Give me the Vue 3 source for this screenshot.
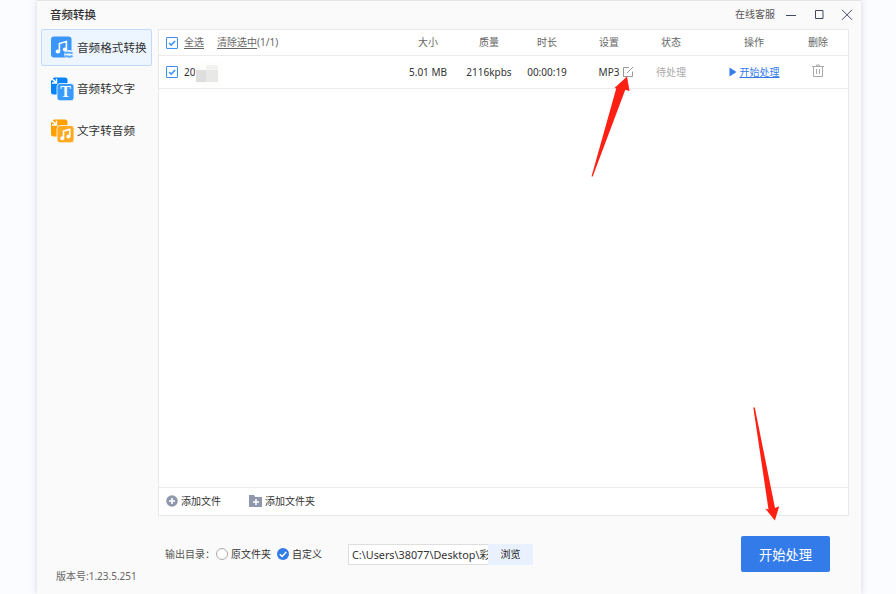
<template>
  <div class="desktop">
    <div class="window">
      <header class="title-bar">
        <h1>音频转换</h1>
        <div class="title-actions">
          <span class="service">在线客服</span>
          <svg class="win-icon" viewBox="0 0 12 12"><path d="M1 6.500h10" /></svg>
          <svg class="win-icon" viewBox="0 0 12 12"><path d="M2.500 1.500h7.500v8h-7.500z" /></svg>
          <svg class="win-icon" viewBox="0 0 12 12"><path d="M1 .8l10 10M11 .8l-10 10" /></svg>
        </div>
      </header>

      <div class="body">
        <aside class="sidebar">
          <nav>
            <button
              v-for="item in menus"
              :key="item.id"
              class="menu-item"
              :class="{ active: item.id === activeMenu }"
              @click="activeMenu = item.id"
            >
              <svg v-if="item.id === 'format'" class="menu-icon" viewBox="0 0 24 24">
                <rect x="1" y=".5" width="20.500" height="21" rx="3" fill="#3b96fa" />
                <path d="M9.400 15.500V7.600l7-2v8" fill="none" stroke="#fff" stroke-width="1.600" />
                <ellipse cx="7.900" cy="15.500" rx="2.300" ry="2" fill="#fff" />
                <ellipse cx="15" cy="13.500" rx="2.100" ry="1.900" fill="#fff" />
                <circle cx="18.800" cy="18.500" r="4.600" fill="#edf5ff" />
                <path d="M15.200 17.600c1.800-2.400 4-.3 7.400-.6M22.500 19.600c-1.800 2.400-4 .3-7.400.6" fill="none" stroke="#5aa8fb" stroke-width="1.900" />
              </svg>
              <svg v-else class="menu-icon" viewBox="0 0 24 24">
                <rect x="1" y=".5" width="16.500" height="17" rx="2.500" :fill="item.dark" />
                <path d="M0 0h4L1 4z" fill="#fafafa" />
                <path d="M1.500 1.200l4.600 4.400M6.500 1.800v4.300H2" fill="none" stroke="#fff" stroke-width="1.500" />
                <rect x="7" y="6.500" width="17" height="17.300" rx="3" :fill="item.light" stroke="#fafafa" stroke-width=".8" />
                <text v-if="item.id === 'toText'" class="letter" x="15.500" y="20.300">T</text>
                <template v-else>
                  <path d="M13.500 19v-7l6.200-1.600v7" fill="none" stroke="#fff" stroke-width="1.600" />
                  <circle cx="12.300" cy="19.200" r="2" fill="#fff" />
                  <circle cx="18.400" cy="17.600" r="2" fill="#fff" />
                </template>
              </svg>
              <span>{{ item.label }}</span>
            </button>
          </nav>
          <p class="version">版本号:1.23.5.251</p>
        </aside>

        <main class="main">
          <section class="panel">
            <div class="row row-head">
              <div class="name-cell">
                <span class="checkbox"><svg viewBox="0 0 12 12"><path d="M2.500 6l2.500 2.500 4.800-4.800" /></svg></span>
                <a class="select-all">全选</a>
                <span><a>清除选中</a>(1/1)</span>
              </div>
              <span v-for="col in columns" :key="col">{{ col }}</span>
            </div>

            <div v-for="file in files" :key="file.name" class="row row-file">
              <div class="name-cell">
                <span class="checkbox"><svg viewBox="0 0 12 12"><path d="M2.500 6l2.500 2.500 4.800-4.800" /></svg></span>
                <span>{{ file.name }}</span>
                <span class="mosaic"><i></i><i></i></span>
              </div>
              <span>{{ file.size }}</span>
              <span>{{ file.quality }}</span>
              <span>{{ file.duration }}</span>
              <span class="format">
                {{ file.format }}
                <svg class="edit" viewBox="0 0 12 12"><path d="M7 1.500H1.500v9h9V5.500M5 7l6.200-6.200" /></svg>
              </span>
              <span class="status">{{ file.status }}</span>
              <span class="operate">
                <svg viewBox="0 0 8 10"><path d="M.5.500L7.500 5 .5 9.500z" /></svg>
                <a>开始处理</a>
              </span>
              <span>
                <svg class="trash" viewBox="0 0 14 14"><path d="M1 2.500h12M5.500 2.500V1h3v1.500M2.500 2.500v10h9v-10M5.500 5v5M8.500 5v5" /></svg>
              </span>
            </div>

            <footer class="panel-footer">
              <button class="add">
                <svg viewBox="0 0 12 12"><circle cx="6" cy="6" r="5.800" fill="#8f98ac" /><path d="M6 3v6M3 6h6" stroke="#fff" stroke-width="1.600" /></svg>
                添加文件
              </button>
              <button class="add add-folder">
                <svg viewBox="0 0 13 12"><path d="M0 0h5l1.200 2H13v10H0z" fill="#8f98ac" /><path d="M7 4v6M4 7h6" stroke="#fff" stroke-width="1.500" /></svg>
                添加文件夹
              </button>
            </footer>
          </section>

          <section class="output">
            <span class="output-label">输出目录：</span>
            <label class="radio" @click="target = 'origin'">
              <span class="dot" :class="{ on: target === 'origin' }"></span>原文件夹
            </label>
            <label class="radio" @click="target = 'custom'">
              <span class="dot" :class="{ on: target === 'custom' }">
                <svg v-if="target === 'custom'" viewBox="0 0 12 12"><path d="M2.800 6.200l2.300 2.300 4.200-4.500" /></svg>
              </span>自定义
            </label>
            <div class="path">
              <span class="path-text">C:\Users\38077\Desktop\彩</span>
              <button class="browse">浏览</button>
            </div>
            <button class="start">开始处理</button>
          </section>
        </main>
      </div>
    </div>

    <!-- guide arrows -->
    <svg class="guides" viewBox="0 0 896 594">
      <path d="M591.500 176.500L616.200 88.500l-1.700-.5L627 76.500l2.500 14.500-4.200-1.300L592.700 176.500z" />
      <path d="M753.300 407.500L768.500 509.500l-3.300-1 9.700 12 4.300-14.200-4.200 1.700L754.800 407.500z" />
    </svg>
  </div>
</template>

<script setup>
import { ref } from 'vue';

const menus = [
  { id: 'format', label: '音频格式转换' },
  { id: 'toText', label: '音频转文字', dark: '#0783fb', light: '#379bfd' },
  { id: 'toAudio', label: '文字转音频', dark: '#ffa000', light: '#ffaa20' }
];

const columns = ['大小', '质量', '时长', '设置', '状态', '操作', '删除'];

const files = [
  {
    name: '20',
    size: '5.01 MB',
    quality: '2116kpbs',
    duration: '00:00:19',
    format: 'MP3',
    status: '待处理'
  }
];

const activeMenu = ref('format');
const target = ref('custom');
</script>

<style>
body {
  margin: 0;
  overflow: hidden;
}
</style>

<style scoped>
* {
  box-sizing: border-box;
}
.desktop {
  position: relative;
  height: 594px;
  padding: 0 35px 0 37px;
  background: #fbfcff;
  font-family: "Noto Sans", "Noto Sans CJK SC", sans-serif;
  font-size: 10px;
  line-height: 14px;
  color: #333;
  overflow: hidden;
}
button {
  border: none;
  background: none;
  padding: 0;
  font: inherit;
  color: inherit;
}
svg {
  display: block;
  flex: none;
}
.window {
  height: 100%;
  display: flex;
  flex-direction: column;
  background: #fafafa;
  border-top: 1px solid #e4e4e4;
  box-shadow: 0 0 7px rgba(60, 65, 80, 0.2);
}
.title-bar {
  height: 28px;
  display: flex;
  align-items: center;
  justify-content: space-between;
  padding: 0 8px 0 13px;
}
.title-bar h1 {
  margin: 0;
  font-size: 11.5px;
  font-weight: 500;
}
.title-actions {
  display: flex;
  align-items: center;
  gap: 16px;
}
.service {
  color: #555;
  margin: -2px -6px 0 0;
}
.win-icon {
  width: 12px;
  height: 12px;
  fill: none;
  stroke: #3f4960;
  stroke-width: 1;
}
.body {
  flex: 1;
  display: flex;
  min-height: 0;
}
.sidebar {
  width: 121px;
  display: flex;
  flex-direction: column;
  justify-content: space-between;
  padding: 0 6px 11px 4px;
}
nav {
  display: flex;
  flex-direction: column;
  gap: 4.500px;
}
.menu-item {
  height: 37px;
  display: flex;
  align-items: center;
  gap: 3px;
  padding-left: 8px;
  border: 1px solid transparent;
  border-radius: 2px;
  font-size: 11.6px;
  white-space: nowrap;
}
.menu-item.active {
  background: #edf5ff;
  border-color: #bfdafa;
}
.menu-icon {
  width: 24px;
  height: 24px;
}
.letter {
  font-family: "Liberation Serif", serif;
  font-size: 16px;
  font-weight: 700;
  text-anchor: middle;
  fill: #fff;
}
.version {
  margin: 0 0 0 15px;
  color: #666;
}
.main {
  flex: 1;
  min-width: 0;
  padding-right: 12px;
}
.panel {
  height: 487px;
  display: flex;
  flex-direction: column;
  background: #fff;
  border: 1px solid #e9e9e9;
}
.row {
  display: grid;
  grid-template-columns: 238px 62px 60px 56px 68px 56px 110px 18px;
  align-items: center;
  justify-items: center;
  border-bottom: 1px solid #ebebeb;
  white-space: nowrap;
}
.row-head {
  height: 26px;
  padding-bottom: 2px;
  color: #666;
}
.row-head .checkbox {
  margin-top: 2px;
}
.row-file {
  height: 33px;
}
.name-cell {
  justify-self: stretch;
  display: flex;
  align-items: center;
  padding-left: 7px;
}
.checkbox {
  width: 12px;
  height: 12px;
  margin-right: 6px;
  border: 1px solid #3d91f5;
  border-radius: 1px;
}
.checkbox svg {
  fill: none;
  stroke: #3d91f5;
  stroke-width: 1.8;
}
.name-cell a {
  text-decoration: underline;
  text-underline-offset: 2px;
}
.select-all {
  margin-right: 13px;
}
.mosaic {
  display: flex;
  align-items: flex-end;
  height: 26px;
  margin: -6px 0 -12px 0;
  padding: 0 4px 6px 1px;
  border-radius: 12px 0 8px 8px;
  background: #fdfdfc;
}
.mosaic i {
  width: 10px;
  height: 12px;
  background: #dededf;
}
.mosaic i:nth-child(2) {
  width: 12px;
  height: 17px;
  background: linear-gradient(#f2f2f1 5px, #e8e8e6 5px);
}
.format {
  display: flex;
  align-items: center;
  gap: 3px;
  padding-left: 15px;
}
.edit {
  width: 12px;
  height: 12px;
  fill: none;
  stroke: #999;
}
.status {
  color: #aaa;
}
.operate {
  display: flex;
  align-items: center;
  gap: 3px;
  color: #347bea;
}
.operate svg {
  width: 8px;
  height: 10px;
  fill: #347bea;
}
.operate a {
  text-decoration: underline;
  text-underline-offset: 1px;
}
.trash {
  width: 14px;
  height: 14px;
  margin-top: -3px;
  fill: none;
  stroke: #aaa;
}
.panel-footer {
  height: 28px;
  margin-top: auto;
  display: flex;
  align-items: center;
  gap: 28px;
  padding: 0 0 2px 7px;
  border-top: 1px solid #ebebeb;
}
.add {
  display: flex;
  align-items: center;
  gap: 3px;
}
.add svg {
  width: 12px;
  height: 12px;
}
.add-folder svg {
  width: 13px;
}
.output {
  height: 76px;
  display: flex;
  align-items: center;
  padding: 0 19px 0 7px;
  white-space: nowrap;
}
.output-label {
  width: 51px;
  color: #555;
}
.radio {
  display: flex;
  align-items: center;
  gap: 3px;
  margin-right: 6px;
}
.dot {
  width: 12px;
  height: 12px;
  border: 1px solid #aaa;
  border-radius: 50%;
  background: #fff;
}
.dot.on {
  border: none;
  background: #347bea;
}
.dot svg {
  fill: none;
  stroke: #fff;
  stroke-width: 1.5;
}
.path {
  width: 186px;
  height: 21px;
  display: flex;
  margin-left: 20px;
}
.path-text {
  width: 140px;
  padding-left: 3px;
  border: 1px solid #dedede;
  border-right: none;
  background: #fff;
  font-size: 10.8px;
  line-height: 19px;
  overflow: hidden;
}
.browse {
  width: 45px;
  background: #eaf1fe;
  color: #222;
}
.start {
  width: 89px;
  height: 36px;
  margin-left: auto;
  padding-top: 1px;
  border-radius: 2px;
  background: #347bea;
  color: #fff;
  font-size: 13.3px;
}
.guides {
  position: absolute;
  inset: 0;
  width: 896px;
  height: 594px;
  pointer-events: none;
  fill: #ff2014;
}
</style>
